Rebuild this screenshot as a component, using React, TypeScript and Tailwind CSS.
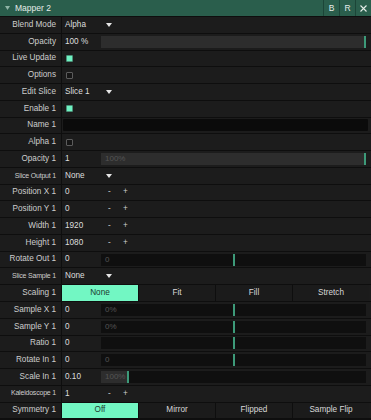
import React from 'react';

const font = { fontFamily: '"Liberation Sans", Arial, sans-serif' };

type Row =
  | { label: string; small?: boolean; kind: 'dropdown'; value: string }
  | { label: string; small?: boolean; kind: 'slider'; value: string; text: string; fill: number; handle: number }
  | { label: string; small?: boolean; kind: 'check'; on: boolean }
  | { label: string; small?: boolean; kind: 'text' }
  | { label: string; small?: boolean; kind: 'stepper'; value: string }
  | { label: string; small?: boolean; kind: 'toggle'; options: string[]; active: number };

const rows: Row[] = [
  { label: 'Blend Mode', kind: 'dropdown', value: 'Alpha' },
  { label: 'Opacity', kind: 'slider', value: '100 %', text: '', fill: 1, handle: 1 },
  { label: 'Live Update', kind: 'check', on: true },
  { label: 'Options', kind: 'check', on: false },
  { label: 'Edit Slice', kind: 'dropdown', value: 'Slice 1' },
  { label: 'Enable 1', kind: 'check', on: true },
  { label: 'Name 1', kind: 'text' },
  { label: 'Alpha 1', kind: 'check', on: false },
  { label: 'Opacity 1', kind: 'slider', value: '1', text: '100%', fill: 1, handle: 1 },
  { label: 'Slice Output 1', small: true, kind: 'dropdown', value: 'None' },
  { label: 'Position X 1', kind: 'stepper', value: '0' },
  { label: 'Position Y 1', kind: 'stepper', value: '0' },
  { label: 'Width 1', kind: 'stepper', value: '1920' },
  { label: 'Height 1', kind: 'stepper', value: '1080' },
  { label: 'Rotate Out 1', kind: 'slider', value: '0', text: '0', fill: 0, handle: 0.5 },
  { label: 'Slice Sample 1', small: true, kind: 'dropdown', value: 'None' },
  { label: 'Scaling 1', kind: 'toggle', options: ['None', 'Fit', 'Fill', 'Stretch'], active: 0 },
  { label: 'Sample X 1', kind: 'slider', value: '0', text: '0%', fill: 0, handle: 0.5 },
  { label: 'Sample Y 1', kind: 'slider', value: '0', text: '0%', fill: 0, handle: 0.5 },
  { label: 'Ratio 1', kind: 'slider', value: '0', text: '', fill: 0, handle: 0.5 },
  { label: 'Rotate In 1', kind: 'slider', value: '0', text: '0', fill: 0, handle: 0.5 },
  { label: 'Scale In 1', kind: 'slider', value: '0.10', text: '100%', fill: 0.1, handle: 0.1 },
  { label: 'Kaleidoscope 1', small: true, kind: 'stepper', value: '1' },
  { label: 'Symmetry 1', kind: 'toggle', options: ['Off', 'Mirror', 'Flipped', 'Sample Flip'], active: 0 },
];

function Arrow() {
  return (
    <svg width="6" height="4" viewBox="0 0 6 4" className="ml-auto">
      <path d="M0 0 H6 L3 4 Z" fill="#e6e6e6" />
    </svg>
  );
}

function Slider({ text, fill, handle }: { text: string; fill: number; handle: number }) {
  return (
    <div className="relative h-[12px] flex-1 bg-[#0f0f0f]">
      {fill > 0 && (
        <div className="absolute inset-y-0 left-0 bg-[#2d2d2d]" style={{ width: `${fill * 100}%` }} />
      )}
      <span className="absolute left-[4px] top-0 text-[8px] leading-[12px] text-[#555555]">{text}</span>
      <div
        className="absolute inset-y-0 w-[2px] bg-[#3d9a79]"
        style={{ left: `calc(${handle * 100}% - ${handle * 2}px)` }}
      />
    </div>
  );
}

function Value({ row }: { row: Row }) {
  switch (row.kind) {
    case 'dropdown':
      return (
        <div className="flex w-[50px] items-center pl-[3px] text-[#dedede]">
          <span>{row.value}</span>
          <Arrow />
        </div>
      );
    case 'slider':
      return (
        <div className="flex flex-1 items-center pr-[3px]">
          <span className="w-[39px] pl-[3px] text-[#dedede]">{row.value}</span>
          <Slider text={row.text} fill={row.fill} handle={row.handle} />
        </div>
      );
    case 'check':
      return (
        <div className="flex items-center pl-[4px]">
          <div
            className={
              row.on
                ? 'h-[7px] w-[7px] rounded-[1px] border border-[#4a8f77] bg-[#6ff2c2]'
                : 'h-[7px] w-[7px] rounded-[1px] border border-[#5c5c5c] bg-[#161616]'
            }
          />
        </div>
      );
    case 'text':
      return <div className="mx-[1px] h-[12px] flex-1 rounded-[1px] bg-[#0b0b0b]" />;
    case 'stepper':
      return (
        <div className="flex items-center text-[#dedede]">
          <span className="w-[46px] pl-[3px]">{row.value}</span>
          <span className="w-[15px] text-[#cfcfcf]">-</span>
          <span className="text-[#cfcfcf]">+</span>
        </div>
      );
    case 'toggle':
      return (
        <div className="grid h-full flex-1 grid-cols-4 gap-px bg-[#0e0e0e]">
          {row.options.map((o, i) => (
            <div
              key={o}
              className={
                i === row.active
                  ? 'flex items-center justify-center bg-[#72f7c3] text-[#1c3a30]'
                  : 'flex items-center justify-center bg-[#1b1b1b] text-[#d8d8d8]'
              }
            >
              {o}
            </div>
          ))}
        </div>
      );
  }
}

export default function App() {
  return (
    <div className="h-[420px] w-[371px] overflow-hidden bg-[#0e0e0e] text-[8.2px]" style={font}>
      {/* Title bar */}
      <div className="flex h-[16px] items-stretch bg-[#2a5e4c] text-[#e4ece8]">
        <div className="flex flex-1 items-center gap-[5px] pl-[5px] text-[8.5px]">
          <svg width="5" height="4" viewBox="0 0 5 4">
            <path d="M0 0 H5 L2.5 4 Z" fill="#8fb5a6" />
          </svg>
          <span>Mapper 2</span>
        </div>
        {['B', 'R', '✕'].map((b) => (
          <div key={b} className="flex w-[16px] items-center justify-center border-l border-[#1c4538] text-[8.5px]">
            {b === '✕' ? (
              <svg width="7" height="7" viewBox="0 0 7 7">
                <path d="M0.5 0.5 L6.5 6.5 M6.5 0.5 L0.5 6.5" stroke="#e4ece8" strokeWidth="1.1" />
              </svg>
            ) : (
              b
            )}
          </div>
        ))}
      </div>

      {/* Properties */}
      <div className="flex flex-col gap-[1px] pt-[1px]">
        {rows.map((row) => (
          <div key={row.label} className="flex h-[15.78px] gap-[1px]">
            <div
              className={
                row.small
                  ? 'flex w-[61px] shrink-0 items-center justify-end bg-[#1c1c1c] pr-[5px] text-[7px] tracking-[-0.2px] text-[#cdcdcd]'
                  : 'flex w-[61px] shrink-0 items-center justify-end bg-[#1c1c1c] pr-[5px] text-[#cdcdcd]'
              }
            >
              {row.label}
            </div>
            <div className="flex flex-1 items-center bg-[#1c1c1c] pr-[2px]">
              <Value row={row} />
            </div>
          </div>
        ))}
      </div>
    </div>
  );
}
